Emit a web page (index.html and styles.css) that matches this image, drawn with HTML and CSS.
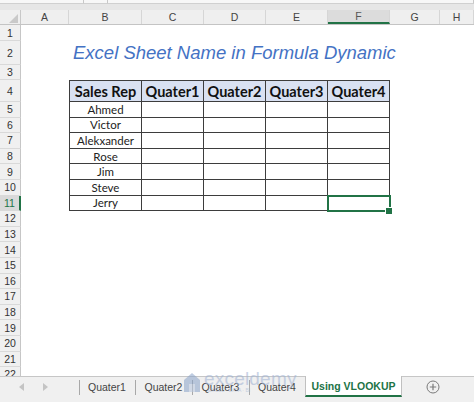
FILE: index.html
```html
<!DOCTYPE html>
<html lang="en">
<head>
<meta charset="utf-8">
<title>Excel Sheet Name in Formula Dynamic</title>
<link rel="stylesheet" href="styles.css">
</head>
<body>
<div class="app">
  <div class="topstrip">
    <span class="seg seg1"></span>
    <span class="seg seg2"></span>
    <span class="seg seg3"></span>
  </div>
  <div class="sheet">
    <div class="row colhdr">
      <div class="corner"><svg width="10" height="10" viewBox="0 0 10 10"><polygon points="10,1 10,10 1,10" fill="#c9c9c9"/></svg></div>
      <div class="ch">A</div>
      <div class="ch">B</div>
      <div class="ch">C</div>
      <div class="ch">D</div>
      <div class="ch">E</div>
      <div class="ch sel">F</div>
      <div class="ch">G</div>
      <div class="ch">H</div>
    </div>
    <div class="row r1"><div class="rh">1</div></div>
    <div class="row r2"><div class="rh">2</div><div class="title">Excel Sheet Name in Formula Dynamic</div></div>
    <div class="row r3"><div class="rh">3</div></div>
    <div class="row r4">
      <div class="rh">4</div><div></div>
      <div class="c th first">Sales Rep</div>
      <div class="c th">Quater1</div>
      <div class="c th">Quater2</div>
      <div class="c th">Quater3</div>
      <div class="c th">Quater4</div>
    </div>
    <div class="row"><div class="rh">5</div><div></div><div class="c first">Ahmed</div><div class="c"></div><div class="c"></div><div class="c"></div><div class="c"></div></div>
    <div class="row"><div class="rh">6</div><div></div><div class="c first">Victor</div><div class="c"></div><div class="c"></div><div class="c"></div><div class="c"></div></div>
    <div class="row"><div class="rh">7</div><div></div><div class="c first">Alekxander</div><div class="c"></div><div class="c"></div><div class="c"></div><div class="c"></div></div>
    <div class="row"><div class="rh">8</div><div></div><div class="c first">Rose</div><div class="c"></div><div class="c"></div><div class="c"></div><div class="c"></div></div>
    <div class="row"><div class="rh">9</div><div></div><div class="c first">Jim</div><div class="c"></div><div class="c"></div><div class="c"></div><div class="c"></div></div>
    <div class="row"><div class="rh">10</div><div></div><div class="c first">Steve</div><div class="c"></div><div class="c"></div><div class="c"></div><div class="c"></div></div>
    <div class="row"><div class="rh sel">11</div><div></div><div class="c first">Jerry</div><div class="c"></div><div class="c"></div><div class="c"></div><div class="c selcell"></div></div>
    <div class="row"><div class="rh">12</div></div>
    <div class="row"><div class="rh">13</div></div>
    <div class="row"><div class="rh">14</div></div>
    <div class="row"><div class="rh">15</div></div>
    <div class="row"><div class="rh">16</div></div>
    <div class="row"><div class="rh">17</div></div>
    <div class="row"><div class="rh">18</div></div>
    <div class="row"><div class="rh">19</div></div>
    <div class="row"><div class="rh">20</div></div>
    <div class="row"><div class="rh">21</div></div>
    <div class="row"><div class="rh">22</div></div>
  </div>
  <div class="tabbar">
    <div class="tabs">
      <div class="nav">
        <svg width="6" height="8" viewBox="0 0 6 8"><polygon points="5,0 5,8 0,4" fill="#c4c4c4"/></svg>
        <svg width="6" height="8" viewBox="0 0 6 8"><polygon points="1,0 1,8 6,4" fill="#c4c4c4"/></svg>
      </div>
      <div class="tab">Quater1</div>
      <div class="tab">Quater2</div>
      <div class="tab">Quater3</div>
      <div class="tab">Quater4</div>
      <div class="tab active">Using VLOOKUP</div>
      <div class="add">
        <svg width="14" height="14" viewBox="0 0 14 14"><circle cx="7" cy="7" r="6" fill="none" stroke="#7a7a7a" stroke-width="1"/><path d="M7 3.8V10.2M3.8 7H10.2" stroke="#7a7a7a" stroke-width="1.2"/></svg>
      </div>
    </div>
  </div>
  <div class="watermark">
    <svg class="wm-icon" width="18" height="22" viewBox="0 0 18 22"><path d="M1 9 L9 2 L17 9 L17 21 L1 21 Z" fill="#8aa3c9"/><path d="M6 21 V13 H12 V21" fill="#b9c8df"/></svg>
    <div class="wm-text">
      <span class="wm-name">exceldemy</span>
      <span class="wm-tag">EXCEL · DATA · BI</span>
    </div>
  </div>
</div>
</body>
</html>
```

FILE: styles.css
```css
* { box-sizing: border-box; margin: 0; padding: 0; }
html, body { width: 474px; height: 402px; overflow: hidden; background: #fff; }
body { font-family: "Lato", "Liberation Sans", sans-serif; }

.app { display: flex; flex-direction: column; height: 402px; position: relative; }

.topstrip { height: 10px; flex: none; background: #e6e6e6; display: flex; align-items: flex-start; }
.topstrip .seg { height: 4px; background: #f7f7f7; border-bottom: 1px solid #d0d0d0; border-right: 1px solid #c8c8c8; }
.seg1 { width: 84px; }
.seg2 { width: 24px; }
.seg3 { flex: 1; }

.sheet { flex: 1; overflow: hidden; }

.row {
  display: grid;
  grid-template-columns: 21px 48px 73px 62px 62px 62px 62px 50px 1fr;
  height: 15.6px;
}

.colhdr { height: 15px; background: #efefef; border-bottom: 1px solid #c4c4c4; }
.corner { display: flex; align-items: flex-end; justify-content: flex-end; padding: 0 2px 1px 0; border-right: 1px solid #c8c8c8; }
.ch {
  border-right: 1px solid #d6d6d6;
  font-family: "Liberation Sans", sans-serif;
  font-size: 10.5px; color: #444;
  display: flex; align-items: center; justify-content: center;
}
.ch.sel { background: #dcdcdc; border-bottom: 2px solid #217346; color: #555; }

.r1 { height: 16px; }
.r2 { height: 24px; }
.r3 { height: 15px; }
.r4 { height: 22px; }

.rh {
  background: #f0f0f0;
  border-right: 1px solid #c6c6c6;
  border-bottom: 1px solid #d9d9d9;
  font-family: "Liberation Sans", sans-serif;
  font-size: 10.5px; color: #333;
  display: flex; align-items: center; justify-content: center;
}
.rh.sel { background: #d9d9d9; color: #217346; border-right: 2px solid #217346; }

.title {
  grid-column: 3 / -1;
  font-family: "Liberation Sans", sans-serif;
  font-style: italic;
  font-size: 18.5px;
  color: #4472c4;
  white-space: nowrap;
  padding-left: 4px;
  display: flex; align-items: center;
}

.c {
  border-right: 1px solid #3d3d3d;
  border-bottom: 1px solid #3d3d3d;
  font-size: 11.5px; color: #222;
  display: flex; align-items: center; justify-content: center;
  white-space: nowrap;
}
.c.first { border-left: 1px solid #3d3d3d; }
.th { background: #d9e1f2; border-top: 1px solid #3d3d3d; font-weight: bold; font-size: 14.5px; color: #111; }

.selcell { position: relative; }
.selcell::after {
  content: ""; position: absolute;
  top: -1px; left: -1px; right: -2px; bottom: -2px;
  border: 2px solid #217346;
}
.selcell::before {
  content: ""; position: absolute; z-index: 2;
  width: 6px; height: 6px; right: -4px; bottom: -5px;
  background: #217346; border: 1px solid #fff;
}

.tabbar {
  height: 26px; flex: none;
  background: #f0f0f0;
  border-top: 1px solid #c6c6c6;
  padding-bottom: 5px;
  font-family: "Liberation Sans", sans-serif;
  font-size: 10.5px; color: #444;
}
.tabs { display: flex; height: 100%; }
.nav { width: 79px; display: flex; align-items: center; gap: 17px; padding-left: 19px; }
.tab { width: 56px; display: flex; align-items: center; justify-content: center; position: relative; }
.tab::before { content: ""; position: absolute; left: 0; top: 3px; height: 15px; border-left: 1px solid #a8a8a8; }
.tab:nth-child(3), .tab:nth-child(4) { width: 57px; }
.tab.active {
  width: 97px; background: #fff; color: #217346; font-weight: bold;
  border-left: 1px solid #c0c0c0; border-right: 1px solid #c0c0c0;
  border-bottom: 2px solid #217346;
  margin-top: -1px;
}
.tab.active::before { display: none; }
.add { flex: 1; display: flex; align-items: center; padding-left: 24px; }

.watermark {
  position: absolute; left: 183px; top: 369px;
  display: flex; align-items: flex-end; gap: 3px;
  opacity: 0.55; pointer-events: none;
}
.wm-text { display: flex; flex-direction: column; line-height: 1; }
.wm-name { font-family: "Liberation Sans", sans-serif; font-size: 19px; color: #9fb2d3; letter-spacing: 0.2px; }
.wm-tag { font-family: "Liberation Sans", sans-serif; font-size: 5px; color: #9fb2d3; padding-left: 4px; }
```
